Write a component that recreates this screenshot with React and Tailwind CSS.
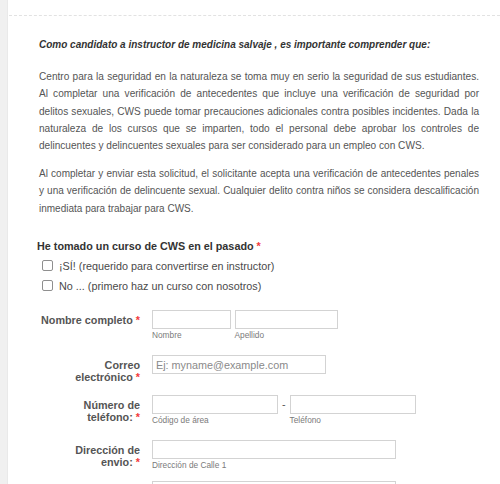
import React from 'react';

const Req = () => <span className="text-[#f23a3c]">{'\u00a0*'}</span>;

const Field = ({ className = '', placeholder = '' }) => (
    <input
        type="text"
        placeholder={placeholder}
        className={`block h-[19px] border border-[#d3d3d3] bg-white px-[3px] text-[10.8px] text-[#555] placeholder:text-[#8a8a8a] focus:outline-none ${className}`}
    />
);

const Sub = ({ children }) => (
    <div className="mt-[1px] text-[8.3px] leading-[10px] text-[#7a7a7a]">{children}</div>
);

const Row = ({ label, className = '', children }) => (
    <div className={`flex items-start ${className}`}>
        <div className="w-[101px] shrink-0 pt-[4px] text-right text-[10.8px] font-bold leading-[12px] text-[#555]">
            {label}
            <Req />
        </div>
        <div className="ml-[12px] flex flex-col">{children}</div>
    </div>
);

const Check = ({ children }) => (
    <div className="flex h-[20px] items-center">
        <span className="ml-[3px] h-[11px] w-[11px] rounded-[2px] border border-[#8f8f8f] bg-white"></span>
        <span className="ml-[6px] text-[10.8px] text-[#4a4a4a]">{children}</span>
    </div>
);

export default function App() {
    return (
        <div
            className="flex h-[484px] w-[500px] overflow-hidden bg-white"
            style={{ fontFamily: '"Liberation Sans", Arial, sans-serif' }}
        >
            {/* franja lateral */}
            <div className="w-[8px] shrink-0 bg-[#f0f0f0] border-r border-[#e9e9e9]"></div>

            <div className="flex-1">
                <div className="ml-[1px] h-[16px] border-b border-dashed border-[#e2e2e2]"></div>

                <div className="pl-[31px] pr-[21px]">
                    <p className="mt-[20px] text-[10px] font-bold italic leading-[17px] text-[#333]">
                        Como candidato a instructor de medicina salvaje , es importante comprender que:
                    </p>

                    <p className="mt-[15px] text-justify text-[10.1px] leading-[17.3px] text-[#555]">
                        Centro para la seguridad en la naturaleza se toma muy en serio la seguridad de sus estudiantes. Al completar una verificación de antecedentes que incluye una verificación de seguridad por delitos sexuales, CWS puede tomar precauciones adicionales contra posibles incidentes. Dada la naturaleza de los cursos que se imparten, todo el personal debe aprobar los controles de delincuentes y delincuentes sexuales para ser considerado para un empleo con CWS.
                    </p>

                    <p className="mt-[10.5px] text-justify text-[10px] leading-[17.3px] text-[#555]">
                        Al completar y enviar esta solicitud, el solicitante acepta una verificación de antecedentes penales y una verificación de delincuente sexual. Cualquier delito contra niños se considera descalificación inmediata para trabajar para CWS.
                    </p>

                    <div className="mt-[21px] -ml-[2px] text-[10.8px] font-bold leading-[17px] text-[#333]">
                        He tomado un curso de CWS en el pasado
                        <Req />
                    </div>

                    <div className="mt-[1px]">
                        <Check>¡SÍ! (requerido para convertirse en instructor)</Check>
                        <Check>No ... (primero haz un curso con nosotros)</Check>
                    </div>

                    <Row label="Nombre completo" className="mt-[14px]">
                        <div className="flex gap-[3.5px]">
                            <div>
                                <Field className="w-[79px]" />
                                <Sub>Nombre</Sub>
                            </div>
                            <div>
                                <Field className="w-[103px]" />
                                <Sub>Apellido</Sub>
                            </div>
                        </div>
                    </Row>

                    <Row label="Correo electrónico" className="mt-[15.5px]">
                        <Field className="w-[174px]" placeholder="Ej: myname@example.com" />
                    </Row>

                    <Row label="Número de teléfono:" className="mt-[12px]">
                        <div className="flex items-start">
                            <div>
                                <Field className="w-[126px]" />
                                <Sub>Código de área</Sub>
                            </div>
                            <span className="mx-[4px] h-[19px] text-[10.8px] leading-[19px] text-[#555]">-</span>
                            <div>
                                <Field className="w-[126px]" />
                                <Sub>Teléfono</Sub>
                            </div>
                        </div>
                    </Row>

                    <Row label="Dirección de envio:" className="mt-[15px]">
                        <Field className="w-[244px]" />
                        <Sub>Dirección de Calle 1</Sub>
                        <Field className="mt-[11px] w-[244px]" />
                    </Row>
                </div>
            </div>
        </div>
    );
}
